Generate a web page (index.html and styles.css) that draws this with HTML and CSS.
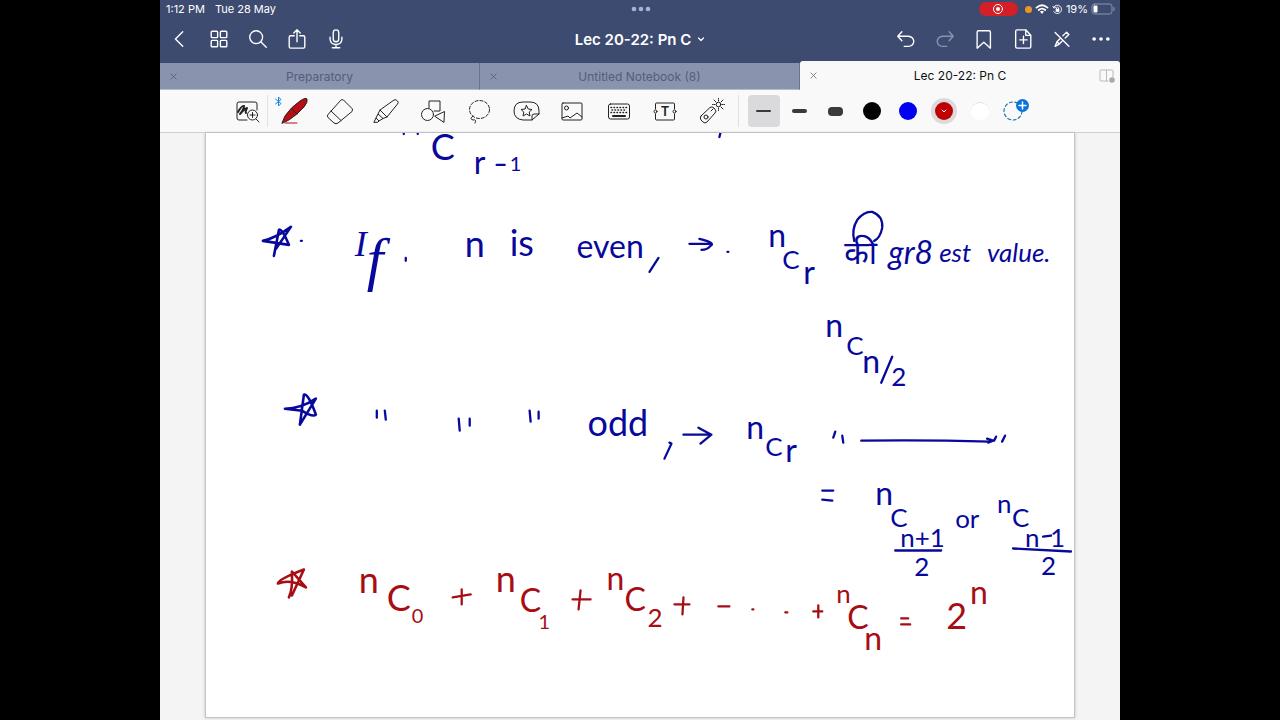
FILE: index.html
```html
<!DOCTYPE html>
<html lang="en">
<head>
    <meta charset="UTF-8">
    <meta name="viewport" content="width=device-width, initial-scale=1.0">
    <title>Lec 20-22: Pn C</title>
    <link rel="stylesheet" href="styles.css">
</head>
<body>
    <div class="app">
        <header class="top">
            <div class="status">
                <div class="status-left"><span>1:12 PM</span><span>Tue 28 May</span></div>
                <svg class="dots" viewBox="0 0 20 6"><circle cx="3" cy="3" r="2.3"/><circle cx="10" cy="3" r="2.3"/><circle cx="17" cy="3" r="2.3"/></svg>
                <div class="status-right">
                    <span class="recording"><svg viewBox="0 0 12 12"><circle cx="6" cy="6" r="4.5"/><circle cx="6" cy="6" r="2" class="solid"/></svg></span>
                    <span class="mic-dot"></span>
                    <svg class="wifi" viewBox="0 0 14 12"><path d="M1.5 4.6Q7 0 12.5 4.6M3.7 7Q7 4.2 10.3 7"/><path class="solid" d="M7 11L5 8.6Q7 7 9 8.6Z"/></svg>
                    <svg class="lock" viewBox="0 0 12 12"><path d="M2 3.2A4.6 4.6 0 1 1 1.8 8.2M1 2.5L2 4.5L4 3.5"/><rect class="solid" x="4" y="5.2" width="4" height="3.4"/><path d="M4.8 5V4.2Q6 2.8 7.2 4.2V5"/></svg>
                    <span>19%</span>
                    <svg class="battery" viewBox="0 0 24 12"><rect x="1" y="1" width="20" height="10" rx="2.5"/><path d="M23 4.5V7.5"/><rect class="level" x="2.5" y="2.5" width="4" height="7" rx="1"/></svg>
                </div>
            </div>
            <nav class="nav">
                <div class="nav-group">
                    <button aria-label="Back"><svg viewBox="0 0 24 24"><path d="M15 4L7 12L15 20"/></svg></button>
                    <button aria-label="Thumbnails"><svg viewBox="0 0 24 24"><rect x="3.5" y="3.5" width="7" height="7" rx="1"/><rect x="13.5" y="3.5" width="7" height="7" rx="1"/><rect x="3.5" y="13.5" width="7" height="7" rx="1"/><rect x="13.5" y="13.5" width="7" height="7" rx="1"/></svg></button>
                    <button aria-label="Search"><svg viewBox="0 0 24 24"><circle cx="10" cy="10" r="7"/><path d="M15 15L21 21"/></svg></button>
                    <button aria-label="Share"><svg viewBox="0 0 24 24"><path d="M9 8.5H5Q3.5 8.5 3.5 10V20.5Q3.5 22 5 22H19Q20.5 22 20.5 20.5V10Q20.5 8.5 19 8.5H15M12 15V2M8.5 5.5L12 2L15.5 5.5"/></svg></button>
                    <button aria-label="Record"><svg viewBox="0 0 24 24"><rect x="9" y="2" width="6" height="13" rx="3"/><path d="M5.5 10V12Q6 18 12 18Q18 18 18.5 12V10M12 18V21.5M8 21.500H16"/></svg></button>
                </div>
                <button class="title">Lec 20-22: Pn C <svg viewBox="0 0 8 8"><path d="M1.5 3L4 5.5L6.5 3"/></svg></button>
                <div class="nav-group nav-right">
                    <button aria-label="Undo"><svg viewBox="0 0 24 24"><path d="M7.5 4L3 9L7.5 14M3 9H14.5Q20 9.5 20.5 14.5Q20 20 14.5 20H10"/></svg></button>
                    <button aria-label="Redo" disabled><svg viewBox="0 0 24 24"><path d="M16.5 4L21 9L16.5 14M21 9H9.500Q4 9.5 3.5 14.5Q4 20 9.5 20H14"/></svg></button>
                    <button aria-label="Bookmark"><svg viewBox="0 0 24 24"><path d="M4.500 4.5Q4.5 3 6 3H17.5Q19 3 19 4.5V22L11.8 15.5L4.5 22Z"/></svg></button>
                    <button aria-label="Add page"><svg viewBox="0 0 24 24"><path d="M15 2H5.5Q4 2 4 3.5V20.5Q4 22 5.500 22H19Q20.5 22 20.5 20.5V8ZM15 2V8H20.5M12.5 9V17M8.500 13H16.5"/></svg></button>
                    <button aria-label="Read only"><svg viewBox="0 0 24 24"><path d="M4.5 5L19.5 20M4.5 20L6.500 15L9 17.5ZM6.500 15L9.5 12M9 17.5L12 14.5M13 8.5L17 4.500L19.500 7L15.5 11"/></svg></button>
                    <button aria-label="More"><svg viewBox="0 0 24 24"><g class="solid"><circle cx="4.500" cy="12" r="2"/><circle cx="12" cy="12" r="2"/><circle cx="19.5" cy="12" r="2"/></g></svg></button>
                </div>
            </nav>
            <div class="tabs">
                <div class="tab"><button aria-label="Close Preparatory"><svg viewBox="0 0 8 8"><path d="M1 1L7 7M7 1L1 7"/></svg></button><a href="#">Preparatory</a></div>
                <div class="tab"><button aria-label="Close Untitled Notebook"><svg viewBox="0 0 8 8"><path d="M1 1L7 7M7 1L1 7"/></svg></button><a href="#">Untitled Notebook (8)</a></div>
                <div class="tab active"><button aria-label="Close Lec 20-22"><svg viewBox="0 0 8 8"><path d="M1 1L7 7M7 1L1 7"/></svg></button><a href="#">Lec 20-22: Pn C</a><button aria-label="Split view"><svg class="split" viewBox="0 0 16 14"><path d="M9 12H2Q1 12 1 11V2Q1 1 2 1H13Q14 1 14 2V8M7.5 1V12"/><circle cx="13" cy="11" r="2.8"/></svg></button></div>
            </div>
        </header>

        <div class="toolbar">
            <div class="tools">
                <button class="zoom" aria-label="Zoom window"><svg viewBox="0 0 30 30"><path d="M15 24H7Q5 24 5 22V8Q5 6 7 6H23Q25 6 25 8V14M24 23L27 26M20.5 16.5V21.5M18 19H23"/><circle cx="20.5" cy="19" r="5"/><path class="thick" d="M6 16Q10 9 12 10Q12 13 8 18Q13 12 15 12Q13 16 14 17"/></svg></button>
                <button aria-label="Pen"><svg viewBox="0 0 30 30"><path class="bluetooth" d="M-3.5 3L2 7.500L-.5 10V1L2 3.5L-3.5 8"/><path class="pen" d="M3 27L6 20Q12 11 21 5Q27 1 28 3Q29 6 25 11Q18 19 10 24Z"/><path d="M13 13L18 18"/><path class="pen-line" d="M6 27H18"/></svg></button>
                <button aria-label="Eraser"><svg viewBox="0 0 30 30"><path d="M16 4Q17 3 18.5 4L27 12.5Q28 14 27 15.5L13 27Q11 28.5 9 27L3 21.5Q1.5 20 3 18.5ZM6 15L16 24.5"/></svg></button>
                <button aria-label="Highlighter"><svg viewBox="0 0 30 30"><path d="M3 26L5 22L8 25L7 26ZM5 22L7 18L12 22.5L8 25M7 18L9 14L23 4Q25 3 26.5 5Q28 6.5 26.5 8L16 21L12 22.5M9 14L16 21"/></svg></button>
                <button aria-label="Shapes"><svg viewBox="0 0 30 30"><path d="M11 12V5H22V15H16"/><circle cx="9.5" cy="18.5" r="6"/><path d="M17 20L26.5 15.5L26 26Z"/></svg></button>
                <button aria-label="Lasso"><svg viewBox="0 0 30 30"><ellipse class="dashed" cx="15.500" cy="13.500" rx="10" ry="9"/><path d="M9 20Q5 23 9 24Q13 23 11 27"/></svg></button>
                <button aria-label="Stickers"><svg viewBox="0 0 30 30"><path d="M21 24H12Q3 23 3 15Q3 6 12 6H19Q28 6 28 15V18L21 24V20Q21 18 23 18H28"/><path d="M15.5 9.5L17.2 13L21 13.5L18.2 16L19 20L15.5 18L12 20L12.8 16L10 13.5L13.8 13Z"/></svg></button>
                <button aria-label="Image"><svg viewBox="0 0 30 30"><rect x="5" y="7" width="20" height="17" rx="1"/><circle cx="9.5" cy="12" r="2"/><path d="M5 22L8 21L11 20L13 22L20 17L25 21"/></svg></button>
                <button aria-label="Keyboard"><svg viewBox="0 0 30 30"><rect x="4.5" y="8" width="21" height="15" rx="2"/><path class="keys" d="M7 11.5H23M8 14H22M7 16.5H23"/><path class="thick" d="M9 20H21"/></svg></button>
                <button aria-label="Text"><svg viewBox="0 0 30 30"><path d="M5.5 13V8Q5.5 7 6.5 7H23.5Q24.5 7 24.5 8V13M5.5 18V23Q5.5 24 6.5 24H23.5Q24.5 24 24.5 23V18"/><circle cx="5.5" cy="15.5" r="1.5"/><circle cx="24.5" cy="15.5" r="1.5"/><text x="15" y="20">T</text></svg></button>
                <button aria-label="Laser pointer"><svg viewBox="0 0 30 30"><path d="M4 20L13 11.5Q15 10 17 12L18 13.5Q20 15 18 17L10 26Q8 28 6 26L4 24Q2.5 22 4 20ZM14 15L16 13"/><circle cx="9" cy="21" r="2"/><circle cx="21.5" cy="8.5" r="2.3"/><path class="rays" d="M21.5 5V2.500M21.5 12V14.5M18 8.5H15.5M25 8.5H27.5M19 6L17 4M24 6L26 4M24 11L26 13"/></svg></button>
            </div>
            <div class="pens">
                <button class="size selected" aria-label="Thin"><i class="thin"></i></button>
                <button class="size" aria-label="Medium"><i class="medium"></i></button>
                <button class="size" aria-label="Wide"><i class="wide"></i></button>
                <button aria-label="Black"><i class="swatch black"></i></button>
                <button aria-label="Blue"><i class="swatch blue"></i></button>
                <button aria-label="Red"><i class="swatch red"><svg viewBox="0 0 8 8"><path d="M2 3L4 5L6 3"/></svg></i></button>
                <button aria-label="White"><i class="swatch white"></i></button>
                <button aria-label="Add colour"><svg class="add" viewBox="0 0 30 30"><circle class="ring" cx="12" cy="15" r="9"/><circle class="badge" cx="21.5" cy="9.5" r="6.5"/><path d="M21.5 6V13M18 9.5H25"/></svg></button>
            </div>
        </div>

        <main class="desk">
            <div class="sheet">
                <!-- note canvas: blue ink first, then red -->
                <svg class="ink" viewBox="205 133 869 585">
                    <g class="blue-ink">
                        <path d="M403 132V134M417 132V134M720 133L719 137"/>
                        <text class="l" x="430" y="160">C</text>
                        <text class="m" x="473" y="174">r</text>
                        <path d="M496 165H504"/>
                        <text class="xs" x="509" y="171">1</text>

                        <path class="star" d="M273 256L278 230Q281 228 288 245L262 241Q275 238 290 227L275 249"/>
                        <path d="M300 241H301"/>
                        <text class="if" x="354" y="256">I<tspan class="tall" x="366" y="279">f</tspan></text>
                        <path d="M405 258V261"/>
                        <text class="l" x="464" y="257">n</text>
                        <text class="l" x="509" y="256">is</text>
                        <text class="m" x="576" y="258">even</text>
                        <path d="M658 258L649 272"/>
                        <path d="M689 244H711M699 239Q716 243 710 246Q707 250 701 250M727 252H728"/>
                        <text class="m" x="768" y="247">n</text>
                        <text class="s" x="782" y="269">C</text>
                        <text class="m" x="803" y="284">r</text>
                        <path d="M854 241Q851 230 857 220Q864 211 872 212Q883 216 882 228Q880 238 874 241"/>
                        <text class="m" x="844" y="264">की</text>
                        <text class="m slant" x="888" y="264">gr8</text>
                        <text class="s slant" x="939" y="262">est</text>
                        <text class="s slant" x="987" y="262">value.</text>

                        <text class="m" x="825" y="337">n</text>
                        <text class="s" x="846" y="355">C</text>
                        <text class="m" x="862" y="373">n</text>
                        <path d="M892 357L881 383"/>
                        <text class="s" x="891" y="386">2</text>

                        <path class="star" d="M299 425L303 395Q307 393 315 415Q312 418 301 411L284 409Q300 409 315 399Z"/>
                        <path d="M376 411V418M384 411L385 420M458 419L459 431M469 419V426M529 411L530 422M538 412V419"/>
                        <text class="l" x="587" y="436">odd</text>
                        <path d="M669 443L671 444L664 459"/>
                        <path d="M683 435H711M698 428L711 435L700 444"/>
                        <text class="m" x="746" y="439">n</text>
                        <text class="s" x="765" y="456">C</text>
                        <text class="m" x="785" y="462">r</text>
                        <path d="M835 432L833 438M842 436L843 443M861 441Q925 440 990 442M987 439L993 441L988 443M996 437L994 441M1005 436L1002 442"/>

                        <path d="M822 491H833M822 500L832 501"/>
                        <text class="m" x="875" y="505">n</text>
                        <text class="s" x="890" y="527">C</text>
                        <text class="s" x="900" y="547">n+1</text>
                        <path d="M895 551H941"/>
                        <text class="s" x="914" y="577">2</text>
                        <text class="s" x="955" y="528">or</text>
                        <text class="s" x="997" y="513">n</text>
                        <text class="s" x="1012" y="527">C</text>
                        <text class="s" x="1025" y="547">n</text>
                        <path d="M1043 537L1051 536"/>
                        <text class="s" x="1050" y="547">1</text>
                        <path d="M1013 549L1071 552"/>
                        <text class="s" x="1041" y="576">2</text>
                    </g>
                    <g class="red-ink">
                        <path class="star" d="M288 598Q292 590 291 572L305 588Q290 579 277 584Q277 580 303 570L291 596"/>
                        <text class="l" x="358" y="594">n</text>
                        <text class="l" x="386" y="612">C</text>
                        <text class="xs" x="411" y="624">0</text>
                        <path d="M452 598L470 595M461 590V605"/>
                        <text class="l" x="495" y="593">n</text>
                        <text class="m" x="519" y="613">C</text>
                        <text class="xs" x="538" y="630">1</text>
                        <path d="M572 600H590M580 591L578 610"/>
                        <text class="m" x="606" y="591">n</text>
                        <text class="m" x="624" y="612">C</text>
                        <text class="s" x="647" y="628">2</text>
                        <path d="M674 605H689M683 598L682 615M718 607H729M752 610H753M785 613H787M813 612H822M818 606V618"/>
                        <text class="s" x="836" y="604">n</text>
                        <text class="m" x="847" y="630">C</text>
                        <text class="m" x="864" y="651">n</text>
                        <path d="M901 619H908M901 625H910"/>
                        <text class="l" x="946" y="630">2</text>
                        <text class="m" x="970" y="605">n</text>
                    </g>
                </svg>
            </div>
        </main>
    </div>
</body>
</html>
```
FILE: styles.css
```css
* {
    box-sizing: border-box;
}
body {
    margin: 0;
    background-color: #000;
    font-family: Inter, "Liberation Sans", sans-serif;
}
button {
    display: flex;
    align-items: center;
    justify-content: center;
    padding: 0;
    border: none;
    background: none;
    color: inherit;
    font: inherit;
}
svg {
    fill: none;
    stroke: currentColor;
    stroke-linecap: round;
    stroke-linejoin: round;
    overflow: visible;
}
.solid {
    fill: currentColor;
    stroke: none;
}
.app {
    display: flex;
    flex-direction: column;
    max-width: calc(100vh * 4 / 3);
    height: 100vh;
    margin: 0 auto;
    overflow: hidden;
    background-color: #f4f4f5;
}
.top {
    background-color: #3e4b70;
    color: #fff;
}

/* status bar */
.status {
    display: grid;
    grid-template-columns: 1fr auto 1fr;
    align-items: center;
    height: 18px;
    padding: 0 5px 0 6px;
    font-size: 11px;
}
.status-left {
    display: flex;
    gap: 10px;
}
.dots {
    width: 20px;
    height: 6px;
    fill: #a5b3dc;
    stroke: none;
}
.status-right {
    display: flex;
    align-items: center;
    justify-content: flex-end;
    gap: 3px;
}
.recording {
    display: flex;
    align-items: center;
    justify-content: center;
    width: 39px;
    height: 14px;
    margin-right: 4px;
    border-radius: 7px;
    background-color: #d31f27;
}
.recording svg {
    width: 12px;
    height: 12px;
}
.mic-dot {
    width: 7px;
    height: 7px;
    border-radius: 50%;
    background-color: #ef9426;
}
.wifi {
    width: 14px;
    height: 12px;
    stroke-width: 1.8;
}
.lock {
    width: 11px;
    height: 11px;
}
.battery {
    width: 24px;
    height: 12px;
    stroke: #8a94b2;
}
.battery .level {
    fill: #fff;
    stroke: none;
}

/* navigation */
.nav {
    display: grid;
    grid-template-columns: 1fr auto 1fr;
    align-items: center;
    height: 42px;
}
.nav-group {
    display: flex;
}
.nav-right {
    justify-content: flex-end;
}
.nav-group button {
    width: 39px;
    height: 40px;
}
.nav-group button:disabled {
    color: #8793b6;
}
.nav-group svg {
    width: 22px;
    height: 22px;
    stroke-width: 1.5;
}
.title {
    gap: 6px;
    font-size: 15px;
    font-weight: 600;
}
.title svg {
    width: 8px;
    height: 8px;
    stroke-width: 1.2;
}

/* document tabs */
.tabs {
    display: grid;
    grid-template-columns: repeat(3, 1fr);
    align-items: end;
    height: 30px;
}
.tab {
    display: grid;
    grid-template-columns: 26px 1fr 26px;
    align-items: center;
    height: 27px;
    border-right: 1px solid #68738f;
    border-bottom: 1px solid #b5bbcb;
    background-color: #8a93ad;
    color: #545d7a;
    font-size: 12px;
    text-align: center;
}
.tab a {
    color: inherit;
    text-decoration: none;
}
.tab svg {
    width: 7px;
    height: 7px;
}
.tab.active {
    height: 29px;
    border: none;
    border-radius: 3px 3px 0 0;
    background-color: #f9f9fa;
    color: #111;
}
.tab.active button {
    color: #777;
}
.tab .split {
    width: 16px;
    height: 14px;
    color: #bbb;
}
.split circle {
    fill: #aaa;
    stroke: none;
}

/* drawing tools */
.toolbar {
    display: flex;
    height: 43px;
    padding-left: 64px;
    border-bottom: 1px solid #cfd0d3;
    background-color: #f9f9fa;
    color: #222;
}
.tools {
    display: grid;
    grid-template-columns: repeat(11, 1fr);
    width: 57%;
}
.tools svg {
    width: 30px;
    height: 30px;
}
.zoom {
    margin: 5px 2px 5px 0;
    padding-left: 3px;
    border-right: 1px solid #e1e1e4;
}
.thick {
    stroke-width: 2;
}
.dashed {
    stroke-dasharray: 3 2;
}
.keys {
    stroke-width: 1.5;
    stroke-dasharray: 0.5 2.5;
}
.rays {
    stroke-dasharray: 1 1;
}
.pen {
    fill: #b80d12;
}
.pen-line {
    stroke: #b80d12;
}
.bluetooth {
    stroke: #1686dc;
}
.tools text {
    fill: currentColor;
    stroke: none;
    font-size: 13px;
    font-weight: 600;
    text-anchor: middle;
}
.pens {
    display: grid;
    grid-template-columns: repeat(8, 36px);
    margin: 5px 0 5px 3px;
    padding-left: 7px;
    border-left: 1px solid #e1e1e4;
}
.size {
    margin: 0 2px;
    border-radius: 4px;
}
.size.selected {
    background-color: #dadadc;
}
.size i {
    width: 15px;
    border-radius: 4px;
    background-color: #3a3a3c;
}
.size .thin {
    height: 2px;
}
.size .medium {
    height: 4px;
}
.size .wide {
    height: 9px;
}
.swatch {
    display: flex;
    align-items: center;
    justify-content: center;
    width: 18px;
    height: 18px;
    border-radius: 50%;
}
.black {
    background-color: #000;
}
.blue {
    background-color: #0000f5;
}
.red {
    background-color: #bf0000;
    color: #fff;
    box-shadow: 0 0 0 4px #dcdadd;
}
.red svg {
    width: 8px;
    height: 8px;
}
.white {
    border-top: 1px solid #ddd;
    background-color: #fff;
}
.add {
    width: 30px;
    height: 30px;
    stroke: #fff;
    stroke-width: 1.5;
}
.add .ring {
    stroke: #22799f;
    stroke-width: 1.2;
    stroke-dasharray: 3 2.5;
}
.add .badge {
    fill: #0874dc;
    stroke: none;
}

/* page */
.desk {
    padding: 0 45px;
}
.sheet {
    border: 1px solid #c4c4c7;
    border-top: none;
    background-color: #fff;
    box-shadow: 0 0 3px rgba(0, 0, 0, 0.2);
}
.ink {
    display: block;
    width: 100%;
    overflow: hidden;
    stroke-width: 2.3;
    font-family: Lato, "Noto Sans", sans-serif;
}
.ink text {
    stroke: none;
}
.ink .star {
    stroke-width: 2.6;
}
.blue-ink {
    fill: none;
    stroke: #08089c;
}
.blue-ink text {
    fill: #08089c;
}
.red-ink {
    stroke: #a60d14;
}
.red-ink text {
    fill: #a60d14;
}
.l {
    font-size: 36px;
}
.m {
    font-size: 32px;
}
.s {
    font-size: 26px;
}
.xs {
    font-size: 20px;
}
.slant {
    font-style: italic;
}
.if {
    font-family: "Liberation Serif", serif;
    font-size: 36px;
    font-style: italic;
}
.tall {
    font-size: 60px;
}
```
